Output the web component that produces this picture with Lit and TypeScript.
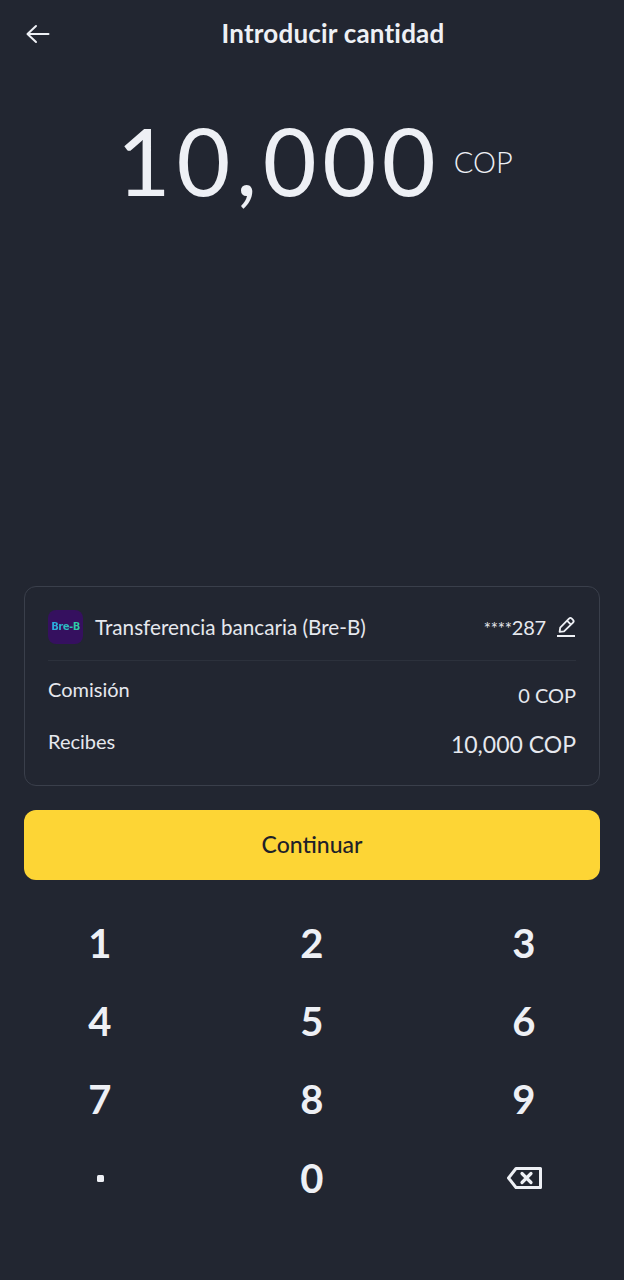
import { LitElement, html, css, svg } from 'lit';
import { customElement } from 'lit/decorators.js';

const KEYS = ['1', '2', '3', '4', '5', '6', '7', '8', '9', '·', '0', 'del'];

const backspaceIcon = svg`
  <path d="M10 2.5H34.5V21.5H10L2.5 12Z" fill="none" stroke="#eef0f5" stroke-width="3" stroke-linejoin="round"/>
  <path d="M16 7.5L25 16.5M25 7.5L16 16.5" fill="none" stroke="#eef0f5" stroke-width="3.2" stroke-linecap="round"/>`;

@customElement('app-root')
export class AppRoot extends LitElement {
  static styles = css`
    :host {
      display: flex;
      flex-direction: column;
      height: 1280px;
      box-sizing: border-box;
      background: #222631;
      color: #eef0f5;
      font-family: 'Lato', 'Liberation Sans', sans-serif;
      overflow: hidden;
    }
    .header {
      display: flex;
      align-items: center;
      height: 68px;
      box-sizing: border-box;
      padding: 0 0 1px 24px;
    }
    .back {
      width: 28px;
      height: 24px;
      flex: none;
    }
    .title {
      flex: 1;
      text-align: center;
      font-size: 26px;
      font-weight: 700;
      letter-spacing: 0.2px;
      padding-right: 10px;
      padding-bottom: 1px;
    }
    .amount {
      display: flex;
      justify-content: center;
      align-items: flex-start;
      gap: 12.5px;
      margin-top: 32px;
      padding-left: 5.6px;
    }
    .value {
      font-size: 93px;
      font-weight: 400;
      letter-spacing: 5.6px;
      line-height: 120px;
    }
    .currency {
      font-size: 29px;
      font-weight: 300;
      line-height: 36px;
      margin-top: 44px;
    }
    .spacer {
      flex: 1;
    }
    .card {
      margin: 0 24px;
      height: 200px;
      box-sizing: border-box;
      border: 1px solid #3a3f4b;
      border-radius: 12px;
      padding: 0 23px;
      color: #e6e8ee;
    }
    .method {
      display: flex;
      align-items: center;
      gap: 12px;
      height: 74px;
      box-sizing: border-box;
      padding-top: 6px;
      border-bottom: 1px solid #2c313c;
      font-size: 20.7px;
    }
    .logo {
      width: 35px;
      height: 34px;
      flex: none;
      display: flex;
      align-items: center;
      justify-content: center;
      border-radius: 8px;
      background: #35105f;
    }
    .logo span {
      font-family: 'DejaVu Sans', sans-serif;
      font-size: 10px;
      font-weight: 700;
      letter-spacing: -0.5px;
      background: linear-gradient(90deg, #2aa8e6, #2ed49a);
      -webkit-background-clip: text;
      background-clip: text;
      color: transparent;
    }
    .method-name {
      flex: 1;
      font-weight: 400;
    }
    .account {
      font-size: 20px;
      letter-spacing: -0.2px;
      margin-right: 1px;
    }
    .stars {
      font-size: 17px;
    }
    .edit {
      width: 20px;
      height: 23px;
      margin-left: -3px;
    }
    .row {
      display: flex;
      justify-content: space-between;
      align-items: flex-start;
      font-size: 20px;
      line-height: 26px;
    }
    .row.fee {
      margin-top: 15px;
    }
    .row.net {
      margin-top: 20px;
    }
    .row .muted-right {
      margin-top: 6px;
    }
    .row .strong-right {
      font-size: 23px;
      line-height: 28px;
      margin-top: 2px;
    }
    .continue {
      display: flex;
      align-items: center;
      justify-content: center;
      margin: 24px 24px 0;
      height: 70px;
      box-sizing: border-box;
      padding-bottom: 3px;
      border-radius: 12px;
      background: #fdd535;
      color: #1e2129;
      font-size: 23px;
      font-weight: 500;
    }
    .keypad {
      display: grid;
      grid-template-columns: repeat(3, 1fr);
      grid-auto-rows: 78.4px;
      margin: 23px -6px 63px;
    }
    .key {
      display: flex;
      align-items: center;
      justify-content: center;
      font-size: 40px;
      font-weight: 700;
      letter-spacing: 0.5px;
    }
    .key svg {
      width: 37px;
      height: 24px;
      margin-top: 1px;
    }
    .dot {
      width: 7px;
      height: 7px;
      margin-top: 1px;
      background: #eef0f5;
      border-radius: 1.5px;
    }
  `;

  renderKey(key: string) {
    if (key === 'del') {
      return html`<div class="key"><svg viewBox="0 0 37 24">${backspaceIcon}</svg></div>`;
    }
    if (key === '·') {
      return html`<div class="key"><div class="dot"></div></div>`;
    }
    return html`<div class="key">${key}</div>`;
  }

  render() {
    return html`
      <div class="header">
        <svg class="back" viewBox="0 0 28 24">
          <path d="M24.5 10H4M12 2L3.5 10L12 18" transform="translate(0 2)" fill="none" stroke="#eef0f5" stroke-width="2" stroke-linecap="round" stroke-linejoin="round"/>
        </svg>
        <div class="title">Introducir cantidad</div>
      </div>
      <div class="amount">
        <span class="value">10,000</span>
        <span class="currency">COP</span>
      </div>
      <div class="spacer"></div>
      <div class="card">
        <div class="method">
          <div class="logo"><span>Bre-B</span></div>
          <div class="method-name">Transferencia bancaria (Bre-B)</div>
          <div class="account"><span class="stars">****</span>287</div>
          <svg class="edit" viewBox="0 0 20 23">
            <path d="M3.6 16.8L4.2 12.6L13 3.6a2 2 0 0 1 2.8 0l1.2 1.2a2 2 0 0 1 0 2.8L8 16.4Z" fill="none" stroke="#eef0f5" stroke-width="1.8" stroke-linejoin="round"/>
            <path d="M11 5.6L15 9.6" stroke="#eef0f5" stroke-width="1.8"/>
            <path d="M1 21H19" stroke="#eef0f5" stroke-width="2"/>
          </svg>
        </div>
        <div class="row fee">
          <span>Comisión</span>
          <span class="muted-right">0 COP</span>
        </div>
        <div class="row net">
          <span>Recibes</span>
          <span class="strong-right">10,000 COP</span>
        </div>
      </div>
      <div class="continue">Continuar</div>
      <div class="keypad">${KEYS.map((k) => this.renderKey(k))}</div>
    `;
  }
}
